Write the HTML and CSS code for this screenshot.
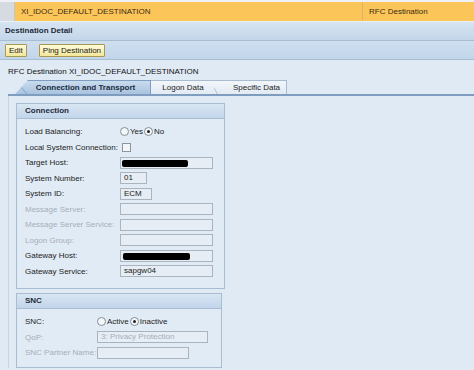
FILE: index.html
```html
<!DOCTYPE html>
<html lang="en">
<head>
  <meta charset="UTF-8" />
  <title>RFC Destination</title>
  <link rel="stylesheet" href="styles.css">
</head>
<body>
  <div class="topbar">
    <div class="selector"></div>
    <div class="cell name">XI_IDOC_DEFAULT_DESTINATION</div>
    <div class="cell type">RFC Destination</div>
  </div>

  <div class="titlebar">Destination Detail</div>
  <div class="toolbar">
    <button class="btn">Edit</button>
    <button class="btn">Ping Destination</button>
  </div>

  <div class="main">
    <div class="rfc-title">RFC Destination XI_IDOC_DEFAULT_DESTINATION</div>

    <div class="tabs">
      <div class="tab active">Connection and Transport</div>
      <div class="tab logon">Logon Data</div>
      <div class="tab specific">Specific Data</div>
    </div>

    <div class="panel">
      <div class="group connection">
        <div class="group-head">Connection</div>
        <div class="group-body">
          <div class="row"><span class="label">Load Balancing:</span>
            <span class="radio"></span><span class="opt">Yes</span><span class="radio on"></span><span class="opt">No</span></div>
          <div class="row"><span class="label">Local System Connection:</span><span class="check"></span></div>
          <div class="row"><span class="label">Target Host:</span><span class="input w93"><i class="ink ink-a"></i></span></div>
          <div class="row"><span class="label">System Number:</span><span class="input w27">01</span></div>
          <div class="row"><span class="label">System ID:</span><span class="input w32">ECM</span></div>
          <div class="row off"><span class="label">Message Server:</span><span class="input w93"></span></div>
          <div class="row off"><span class="label">Message Server Service:</span><span class="input w93"></span></div>
          <div class="row off"><span class="label">Logon Group:</span><span class="input w93"></span></div>
          <div class="row"><span class="label">Gateway Host:</span><span class="input w93"><i class="ink ink-b"></i></span></div>
          <div class="row"><span class="label">Gateway Service:</span><span class="input w93">sapgw04</span></div>
        </div>
      </div>

      <div class="group snc">
        <div class="group-head">SNC</div>
        <div class="group-body">
          <div class="row"><span class="label">SNC:</span>
            <span class="radio"></span><span class="opt">Active</span><span class="radio on"></span><span class="opt">Inactive</span></div>
          <div class="row off"><span class="label">QoP:</span><span class="input w111">3: Privacy Protection</span></div>
          <div class="row off"><span class="label">SNC Partner Name:</span><span class="input w92"></span></div>
        </div>
      </div>
    </div>
  </div>
</body>
</html>
```

FILE: styles.css
```css
body {
  margin: 0;
  width: 474px;
  height: 370px;
  overflow: hidden;
  font-family: "Liberation Sans", Arial, sans-serif;
  font-size: 8px;
  color: #1c1c1c;
  background: #dfeaf5;
}

/* Top result row */
.topbar {
  display: flex;
  height: 19px;
  border-top: 2px solid #eef2f6;
  background: #fcc55a;
}
.selector {
  width: 14px;
  background: #d6dbe1;
  border-right: 1px solid #c0c6ce;
}
.cell {
  display: flex;
  align-items: center;
  color: #3a2a10;
}
.name {
  flex: 1;
  padding-left: 6px;
}
.type {
  width: 105px;
  padding-left: 6px;
  border-left: 1px solid #d9b66a;
}

/* Title + toolbar */
.titlebar {
  height: 18px;
  line-height: 18px;
  padding-left: 5px;
  font-weight: bold;
  color: #1e2a38;
  background: linear-gradient(#d7e4f1, #c3d6ea);
  border-top: 1px solid #e9f0f7;
  border-bottom: 1px solid #a9bdd2;
}
.toolbar {
  display: flex;
  gap: 12px;
  align-items: center;
  height: 18px;
  padding-left: 5px;
  background: linear-gradient(#cfdff0, #c1d5ea);
  border-bottom: 1px solid #a9bdd2;
}
.btn {
  font: inherit;
  font-size: 8px;
  height: 13px;
  padding: 0 3px;
  color: #222;
  background: linear-gradient(#fffbd8, #f4e79a);
  border: 1px solid #a89a52;
  border-radius: 1px;
}

/* Main area */
.main {
  padding-left: 8px;
}
.rfc-title {
  padding-top: 7px;
  height: 11px;
  color: #111;
}
.tabs {
  display: flex;
  margin-top: 1px;
  padding-left: 7px;
  height: 15px;
  border-bottom: 2px solid #7e9dbf;
}
.tab {
  box-sizing: border-box;
  display: flex;
  align-items: center;
  justify-content: center;
  height: 14px;
  margin-top: 1px;
  margin-left: -8px;
  padding: 0 10px 0 16px;
  color: #222;
  background:
    linear-gradient(to top right, transparent calc(50% - 0.7px), #a8bbcf 50%, transparent calc(50% + 0.7px)) no-repeat 0 0 / 8px 14px,
    linear-gradient(#f2f6fa, #e2eaf3);
  border: 1px solid #a8bbcf;
  border-left: none;
  border-bottom: none;
  clip-path: polygon(8px 0, 100% 0, 100% 100%, 0 100%);
}
.tab.active {
  width: 136px;
  margin-left: 0;
  padding: 0 0 0 6px;
  font-weight: bold;
  color: #1c2c40;
  background:
    linear-gradient(to top right, transparent calc(50% - 0.7px), #7e9dbf 50%, transparent calc(50% + 0.7px)) no-repeat 0 0 / 13px 14px,
    linear-gradient(#c9dbee, #a9c3df);
  border-color: #7e9dbf;
  clip-path: polygon(13px 0, 100% 0, 100% 100%, 0 100%);
  z-index: 1;
}
.tab.logon {
  width: 75px;
}
.tab.specific {
  width: 77px;
  padding: 0 3px 0 20px;
}

.panel {
  border-left: 1px solid #c6d6e6;
  padding: 7px 0 0 7px;
}

/* Groups */
.group {
  border: 1px solid #a9bcd0;
  background: #e1ebf5;
  margin-bottom: 4px;
}
.connection {
  width: 207px;
}
.snc {
  width: 204px;
}
.group-head {
  height: 14px;
  line-height: 14px;
  padding-left: 8px;
  font-weight: bold;
  color: #1e2a38;
  background: linear-gradient(#d9e6f3, #c2d5ea);
  border-bottom: 1px solid #a9bcd0;
}
.group-body {
  padding: 5px 0 9px 8px;
}
.snc .group-body {
  padding-bottom: 6px;
}
.row {
  display: flex;
  align-items: center;
  height: 15.5px;
}
.row.off {
  color: #a6aeb8;
}
.label {
  width: 95px;
  flex: none;
}
.snc .label {
  width: 72px;
}

.input {
  display: block;
  box-sizing: border-box;
  height: 12px;
  line-height: 10px;
  padding-left: 3px;
  border: 1px solid #aab4be;
  background: #e6edf4;
  position: relative;
}
.w93 { width: 93px; }
.w92 { width: 92px; }
.w27 { width: 27px; }
.w32 { width: 32px; }
.w111 { width: 111px; }

/* redacted host names */
.ink {
  position: absolute;
  top: 2px;
  height: 7px;
  background: #000;
  border-radius: 2px;
}
.ink-a { left: 1px; width: 66px; }
.ink-b { left: 2px; width: 67px; }

.radio {
  flex: none;
  width: 9px;
  height: 9px;
  box-sizing: border-box;
  border: 1px solid #858d96;
  border-radius: 50%;
  background: #f4f7fa;
  margin-right: 1px;
  position: relative;
}
.radio.on::after {
  content: "";
  position: absolute;
  left: 2px;
  top: 2px;
  width: 3px;
  height: 3px;
  border-radius: 50%;
  background: #222;
}
.opt {
  margin-right: 1px;
}
.check {
  flex: none;
  box-sizing: border-box;
  width: 9px;
  height: 9px;
  margin-left: 2px;
  border: 1px solid #8c949c;
  background: #f2f6f9;
}
```
